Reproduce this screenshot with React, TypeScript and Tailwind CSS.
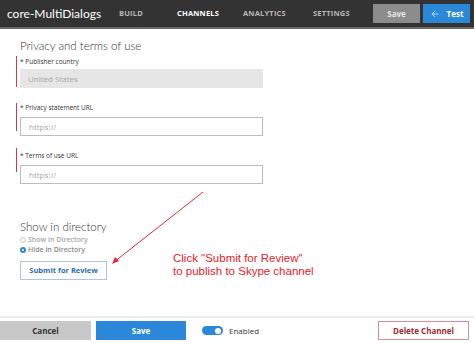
import { ArrowLeft } from "lucide-react";

const ui = { fontFamily: '"Open Sans", "Noto Sans", sans-serif' };
const head = { fontFamily: 'Lato, "Open Sans", sans-serif' };

function Field({ label, value, disabled, lineTop, lineH, className }: {
  label: string;
  value: string;
  disabled?: boolean;
  lineTop: string;
  lineH: string;
  className?: string;
}) {
  return (
    <div className={"relative " + (className ?? "")}>
      {/* hand drawn marker */}
      <span className={"absolute left-[-4px] w-[1px] bg-[#d9364a] " + lineTop + " " + lineH} />
      <div className="h-[10px] text-[6.5px] leading-[10px] text-[#333]">* {label}</div>
      {disabled ? (
        <div className="mt-[2px] h-[19px] w-[243px] bg-[#e6e6e6] px-[8px] text-[8px] leading-[19px] text-[#a6a6a6]">
          {value}
        </div>
      ) : (
        <div className="mt-[4px] h-[19px] w-[243px] border border-[#bdbdbd] px-[8px] text-[8px] leading-[17px] text-[#a6a6a6]">
          {value}
        </div>
      )}
    </div>
  );
}

export default function App() {
  return (
    <div className="relative flex h-[344px] w-[474px] flex-col overflow-hidden bg-white" style={ui}>
      {/* top bar */}
      <div className="flex h-[29px] items-start border-b-2 border-[#6a6a6a] bg-[#333333]">
        <div className="flex h-[27px] w-[119px] shrink-0 items-center whitespace-nowrap pl-[7px] text-[12px] text-white" style={head}>
          core-MultiDialogs
        </div>
        <nav className="flex h-[27px] items-center whitespace-nowrap text-[7.5px] font-bold tracking-[0.2px]">
          <span className="w-[58px] text-[#b8b8b8]">BUILD</span>
          <span className="w-[66px] text-white">CHANNELS</span>
          <span className="w-[70px] text-[#b8b8b8]">ANALYTICS</span>
          <span className="text-[#b8b8b8]">SETTINGS</span>
        </nav>
        <div className="ml-auto mr-[4px] mt-[4px] flex gap-[3px]">
          <button className="h-[19px] w-[47px] bg-[#8c8c8c] text-[8px] font-bold text-[#e6e6e6]">Save</button>
          <button className="flex h-[19px] w-[47px] items-center justify-center gap-[7px] bg-[#2b88d8] text-[8px] font-bold text-white">
            <ArrowLeft size={10} strokeWidth={1.5} />
            Test
          </button>
        </div>
      </div>

      {/* form */}
      <div className="flex-1 pl-[20px]">
        <h2 className="mt-[7px] h-[20px] text-[11.5px] font-light leading-[20px] text-[#333]" style={head}>Privacy and terms of use</h2>
        <Field label="Publisher country" value="United States" disabled lineTop="top-[-1px]" lineH="h-[31px]" className="mt-[1px]" />
        <Field label="Privacy statement URL" value="https://" lineTop="top-[0px]" lineH="h-[28px]" className="mt-[15px]" />
        <Field label="Terms of use URL" value="https://" lineTop="top-[-3px]" lineH="h-[24px]" className="mt-[15px]" />

        <h3 className="mt-[35px] h-[16px] text-[11.5px] font-light leading-[16px] text-[#333]" style={head}>Show in directory</h3>
        <label className="flex h-[10px] items-center gap-[2px] text-[7px] font-semibold text-[#a6a6a6]">
          <span className="h-[6px] w-[6px] rounded-full border border-[#c8c8c8]" />
          Show in Directory
        </label>
        <label className="flex h-[10px] items-center gap-[2px] text-[7px] font-semibold text-[#8a8a8a]">
          <span className="flex h-[6px] w-[6px] items-center justify-center rounded-full bg-[#2b88d8]">
            <span className="h-[2px] w-[2px] rounded-full bg-white" />
          </span>
          Hide in Directory
        </label>
        <button className="mt-[1px] h-[19px] w-[87px] border border-[#a9c6e3] text-[7.5px] font-bold text-[#2b6cb0]">
          Submit for Review
        </button>
      </div>

      {/* footer */}
      <div className="flex h-[28px] items-start border-t-2 border-[#ececec] pt-[3px]">
        <button className="h-[19px] w-[91px] bg-[#c8c8c8] text-[8px] font-bold text-[#333]">Cancel</button>
        <button className="ml-[5px] h-[19px] w-[90px] bg-[#2b88d8] text-[8px] font-bold text-white">Save</button>
        <div className="ml-[16px] flex h-[19px] items-center gap-[6px]">
          <span className="flex h-[9px] w-[21px] items-center justify-end rounded-full bg-[#2b88d8] pr-[2px]">
            <span className="h-[6px] w-[6px] rounded-full bg-white" />
          </span>
          <span className="text-[8px] text-[#333]">Enabled</span>
        </div>
        <button className="ml-auto mr-[5px] h-[19px] w-[91px] border border-[#e08a98] text-[8px] font-bold text-[#a4262c]">
          Delete Channel
        </button>
      </div>

      {/* annotation */}
      <svg className="pointer-events-none absolute left-0 top-0" width="474" height="344">
        <line x1="203" y1="192" x2="114" y2="262" stroke="#e0283a" strokeWidth="1" />
        <path d="M112 264 L115 257 L119 261 Z" fill="#e0283a" />
      </svg>
      <div
        className="absolute left-[173px] top-[252px] text-[11.5px] leading-[13px] text-[#e8202a]"
        style={{ fontFamily: '"Liberation Sans", Arial, sans-serif' }}
      >
        <div>Click "Submit for Review"</div>
        <div>to publish to Skype channel</div>
      </div>
    </div>
  );
}
